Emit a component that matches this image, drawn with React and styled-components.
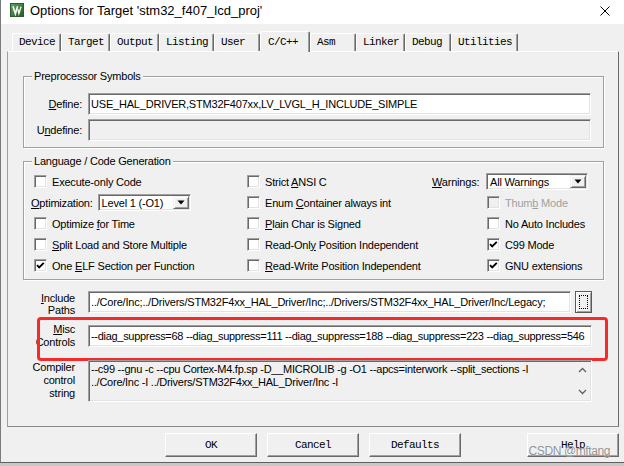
import React from "react";
import styled, { createGlobalStyle } from "styled-components";

const Global = createGlobalStyle`
  html, body { margin: 0; padding: 0; }
  body {
    background: #c8c8c8;
    font-family: "Liberation Sans", Arial, sans-serif;
  }
  #root { width: 624px; height: 466px; overflow: hidden; }
`;

const Window = styled.div`
  box-sizing: border-box;
  width: 624px;
  height: 463px;
  background: #f0f0f0;
  border-left: 1px solid #7b7b7b;
  border-bottom: 1px solid #5f5f5f;
  display: flex;
  flex-direction: column;
`;

const TitleBar = styled.div`
  box-sizing: border-box;
  flex: none;
  height: 24px;
  background: #fff;
  display: flex;
  align-items: flex-start;
  padding: 3px 0 0 9px;
`;

const TitleText = styled.span`
  margin-left: 6px;
  font: 13px/15px "Liberation Sans", Arial, sans-serif;
  color: #000;
`;

const CloseIcon = styled.svg`
  margin: 3px 14px 0 auto;
  flex: none;
`;

const Body = styled.div`
  flex: 1;
  display: flex;
  flex-direction: column;
  padding: 7px 5px 0 6px;
`;

const TabStrip = styled.div`
  display: flex;
  align-items: flex-end;
  height: 20px;
  padding-left: 5px;
  position: relative;
  z-index: 1;
`;

const Tab = styled.div`
  box-sizing: border-box;
  height: ${(p) => (p.$active ? 21 : 18)}px;
  margin-bottom: ${(p) => (p.$active ? -1 : 0)}px;
  min-width: ${(p) => (p.$active ? 50 : 46)}px;
  padding: 0 5px 0 ${(p) => (p.$active ? 7 : 6)}px;
  display: flex;
  align-items: center;
  background: #f0f0f0;
  font: 11px/1 "Liberation Mono", "Courier New", monospace;
  letter-spacing: -0.6px;
  color: #000;
  border-top: 1px solid #fff;
  border-left: 1px solid #fff;
  border-right: 1px solid #696969;
  box-shadow: inset -1px 0 0 #a0a0a0;
  border-radius: 2px 2px 0 0;
`;

const Panel = styled.div`
  box-sizing: border-box;
  height: 376px;
  flex: none;
  display: flex;
  flex-direction: column;
  border: 1px solid;
  border-color: #fff #696969 #8a8a8a #a0a0a0;
`;

const Group = styled.div`
  margin: ${(p) => p.$top}px 14px 0 15px;
  padding: 0 12px ${(p) => p.$bottom}px 0;
  display: flex;
  flex-direction: column;
  border: 1px solid #a0a0a0;
  box-shadow: inset 1px 1px 0 #fff, 1px 1px 0 #fff;
`;

const Legend = styled.span`
  align-self: flex-start;
  margin: -7px 0 0 8px;
  padding: 0 2px;
  height: 13px;
  line-height: 13px;
  background: #f0f0f0;
  font-size: 11px;
  letter-spacing: -0.2px;
  color: #000;
`;

const SymbolRows = styled.div`
  margin-top: 10px;
  display: flex;
  flex-direction: column;
  gap: 4px;
`;

const SymbolRow = styled.div`
  display: flex;
  align-items: center;
  height: 22px;
`;

const SymbolLabel = styled.span`
  width: 58px;
  margin-right: 6px;
  text-align: right;
  font-size: 11px;
  letter-spacing: -0.2px;
  color: #000;
`;

const Field = styled.div`
  box-sizing: border-box;
  flex: 1;
  min-width: 0;
  height: ${(p) => p.$h || 22}px;
  padding: 0 2px;
  display: flex;
  align-items: center;
  overflow: hidden;
  white-space: nowrap;
  background: ${(p) => (p.$disabled ? "#f0f0f0" : "#fff")};
  border: 1px solid;
  border-color: #a0a0a0 #fff #fff #a0a0a0;
  box-shadow: inset 1px 1px 0 #696969, inset -1px -1px 0 #e3e3e3;
  font-size: 11px;
  letter-spacing: ${(p) => (p.$tight ? -0.3 : -0.2)}px;
  color: #000;
`;

const OptionGrid = styled.div`
  margin-top: 3px;
  padding-left: 7px;
  display: grid;
  grid-template-columns: 216px 185px 54px 1fr;
  grid-auto-rows: 21px;
  align-items: center;
`;

const CheckItem = styled.label`
  display: flex;
  align-items: center;
  gap: 5px;
  margin-left: ${(p) => p.$indent || 0}px;
  grid-column: ${(p) => p.$col || "auto"};
  font-size: 11px;
  letter-spacing: -0.2px;
  white-space: nowrap;
  color: ${(p) => (p.$disabled ? "#a0a0a0" : "#000")};
`;

const Box = styled.span`
  box-sizing: border-box;
  flex: none;
  width: 13px;
  height: 13px;
  display: flex;
  align-items: center;
  justify-content: center;
  border: 1px solid;
  border-color: #a0a0a0 #fff #fff #a0a0a0;
  box-shadow: inset 1px 1px 0 #696969, inset -1px -1px 0 #e3e3e3;
  background: ${(p) => (p.$disabled ? "#f0f0f0" : "#fff")};
`;

const FieldLabel = styled.span`
  font-size: 11px;
  letter-spacing: -0.2px;
  white-space: nowrap;
  color: #000;
`;

const Inline = styled.div`
  display: flex;
  align-items: center;
`;

const Combo = styled.div`
  box-sizing: border-box;
  width: ${(p) => p.$w}px;
  height: 17px;
  margin-left: ${(p) => p.$ml || 0}px;
  padding: 1px 1px 1px 3px;
  display: flex;
  align-items: center;
  background: #fff;
  border: 1px solid;
  border-color: #a0a0a0 #fff #fff #a0a0a0;
  box-shadow: inset 1px 1px 0 #696969, inset -1px -1px 0 #e3e3e3;
  font-size: 11px;
  letter-spacing: -0.2px;
  color: #000;
`;

const ComboText = styled.span`
  flex: 1;
  white-space: nowrap;
`;

const DropButton = styled.span`
  box-sizing: border-box;
  width: 16px;
  height: 13px;
  display: flex;
  align-items: center;
  justify-content: center;
  background: #f0f0f0;
  border: 1px solid;
  border-color: #f0f0f0 #696969 #696969 #f0f0f0;
  box-shadow: inset 1px 1px 0 #fff, inset -1px -1px 0 #a0a0a0;
`;

const Fields = styled.div`
  margin: 11px 26px 0 15px;
  display: flex;
  flex-direction: column;
`;

const FieldRow = styled.div`
  position: relative;
  display: flex;
  align-items: flex-start;
  margin-top: ${(p) => p.$mt || 0}px;
`;

const SideLabel = styled.span`
  flex: none;
  width: 52px;
  margin: ${(p) => p.$mt || 0}px 13px 0 0;
  text-align: right;
  font-size: 11px;
  line-height: ${(p) => p.$lh || 13}px;
  letter-spacing: -0.2px;
  color: #000;
`;

const Browse = styled.span`
  box-sizing: border-box;
  flex: none;
  width: 17px;
  height: 22px;
  margin-left: 4px;
  padding: 3px;
  display: flex;
  background: #f0f0f0;
  border: 1px solid #5a5a5a;
  box-shadow: inset 1px 1px 0 #fff, inset -1px -1px 0 #a0a0a0;
`;

const FocusRing = styled.span`
  flex: 1;
  border: 1px dotted #000;
`;

const Highlight = styled.span`
  position: absolute;
  top: -8px;
  bottom: -12px;
  left: 14px;
  right: -16px;
  border: 3px solid #f52b2b;
  border-radius: 4px;
  pointer-events: none;
`;

const CommandBox = styled.div`
  box-sizing: border-box;
  flex: 1;
  min-width: 0;
  height: 42px;
  display: flex;
  background: #f0f0f0;
  border: 1px solid;
  border-color: #a0a0a0 #fff #fff #a0a0a0;
  box-shadow: inset 1px 1px 0 #696969, inset -1px -1px 0 #e3e3e3;
`;

const CommandText = styled.div`
  flex: 1;
  min-width: 0;
  padding: 2px 0 0 2px;
  font-size: 11px;
  line-height: 13px;
  letter-spacing: -0.25px;
  color: #000;
  overflow: hidden;
  white-space: nowrap;
`;

const ScrollBar = styled.div`
  flex: none;
  width: 15px;
  padding: 0 1px 1px 0;
  display: flex;
  flex-direction: column;
  justify-content: space-between;
`;

const ScrollArrow = styled.span`
  height: 17px;
  display: flex;
  align-items: center;
  justify-content: center;
`;

const ButtonRow = styled.div`
  position: relative;
  display: flex;
  gap: 10px;
  margin: 6px 0 0 158px;
`;

const DialogButton = styled.button`
  box-sizing: border-box;
  width: 92px;
  height: 24px;
  margin-left: ${(p) => (p.$push ? "auto" : "0")};
  padding: 0;
  background: #f0f0f0;
  border: 1px solid;
  border-color: #fff #696969 #696969 #fff;
  box-shadow: inset -1px -1px 0 #a0a0a0;
  font: 11px/1 "Liberation Mono", "Courier New", monospace;
  letter-spacing: -0.6px;
  color: #000;
`;

const Watermark = styled.span`
  position: absolute;
  right: 9px;
  top: 11px;
  font: 12px/14px "Liberation Sans", Arial, sans-serif;
  letter-spacing: -0.4px;
  color: rgba(118, 118, 118, 0.8);
  text-shadow: 0 0 1px rgba(255, 255, 255, 0.9);
  pointer-events: none;
`;

const Check = () => (
  <svg width="9" height="9" viewBox="0 0 9 9">
    <polyline points="1,4.2 3.2,6.5 7.8,1.8" fill="none" stroke="#000" strokeWidth="1.9" />
  </svg>
);

const Triangle = () => (
  <svg width="8" height="5" viewBox="0 0 8 5">
    <polygon points="0.5,0.5 7.5,0.5 4,4.5" fill="#000" />
  </svg>
);

const Chevron = ({ up }) => (
  <svg width="9" height="6" viewBox="0 0 9 6">
    <polyline
      points={up ? "1,5 4.5,1.5 8,5" : "1,1 4.5,4.5 8,1"}
      fill="none"
      stroke="#606060"
      strokeWidth="1.3"
    />
  </svg>
);

const AppIcon = () => (
  <svg width="14" height="14" viewBox="0 0 14 14">
    <defs>
      <linearGradient id="uvGreen" x1="0" y1="0" x2="1" y2="1">
        <stop offset="0" stopColor="#5fa35f" />
        <stop offset="1" stopColor="#1f5f26" />
      </linearGradient>
    </defs>
    <rect x="0.5" y="0.5" width="13" height="13" fill="url(#uvGreen)" stroke="#2c5b2c" />
    <path d="M3 3.2 L5.4 10.8 L7.6 3.2" fill="none" stroke="#fff" strokeWidth="1.6" />
    <path d="M7.8 6.2 L8.9 10.6 L11 3.8" fill="none" stroke="#fff" strokeWidth="1.3" />
  </svg>
);

const CheckBox = ({ checked, disabled, children, indent, col }) => (
  <CheckItem $indent={indent} $col={col} $disabled={disabled}>
    <Box $disabled={disabled}>{checked && <Check />}</Box>
    <span>{children}</span>
  </CheckItem>
);

const Select = ({ w, ml, children }) => (
  <Combo $w={w} $ml={ml}>
    <ComboText>{children}</ComboText>
    <DropButton>
      <Triangle />
    </DropButton>
  </Combo>
);

const tabs = ["Device", "Target", "Output", "Listing", "User", "C/C++", "Asm", "Linker", "Debug", "Utilities"];

export default function App() {
  return (
    <>
      <Global />
      <Window>
        <TitleBar>
          <AppIcon />
          <TitleText>Options for Target 'stm32_f407_lcd_proj'</TitleText>
          <CloseIcon width="10" height="10" viewBox="0 0 10 10">
            <path d="M0.5 0.5 L9.5 9.5 M9.5 0.5 L0.5 9.5" stroke="#000" strokeWidth="1" />
          </CloseIcon>
        </TitleBar>

        <Body>
          <TabStrip>
            {tabs.map((t) => (
              <Tab key={t} $active={t === "C/C++"}>
                {t}
              </Tab>
            ))}
          </TabStrip>

          <Panel>
            <Group $top={24} $bottom={6}>
              <Legend>Preprocessor Symbols</Legend>
              <SymbolRows>
                <SymbolRow>
                  <SymbolLabel>
                    <u>D</u>efine:
                  </SymbolLabel>
                  <Field>USE_HAL_DRIVER,STM32F407xx,LV_LVGL_H_INCLUDE_SIMPLE</Field>
                </SymbolRow>
                <SymbolRow>
                  <SymbolLabel>
                    U<u>n</u>define:
                  </SymbolLabel>
                  <Field $disabled />
                </SymbolRow>
              </SymbolRows>
            </Group>

            <Group $top={13} $bottom={3}>
              <Legend>Language / Code Generation</Legend>
              <OptionGrid>
                <CheckBox indent={3}>Execute-only Code</CheckBox>
                <CheckBox>
                  Strict <u>A</u>NSI C
                </CheckBox>
                <FieldLabel>
                  <u>W</u>arnings:
                </FieldLabel>
                <Select w={102}>All Warnings</Select>

                <Inline>
                  <FieldLabel>
                    <u>O</u>ptimization:
                  </FieldLabel>
                  <Select w={93} ml={5}>
                    Level 1 (-O1)
                  </Select>
                </Inline>
                <CheckBox>
                  Enum <u>C</u>ontainer always int
                </CheckBox>
                <CheckBox col={4} indent={1} disabled>
                  Thum<u>b</u> Mode
                </CheckBox>

                <CheckBox indent={3}>
                  Optimize <u>f</u>or Time
                </CheckBox>
                <CheckBox>
                  <u>P</u>lain Char is Signed
                </CheckBox>
                <CheckBox col={4} indent={1}>
                  No Auto Includes
                </CheckBox>

                <CheckBox indent={3}>
                  <u>S</u>plit Load and Store Multiple
                </CheckBox>
                <CheckBox>
                  Read-Onl<u>y</u> Position Independent
                </CheckBox>
                <CheckBox col={4} indent={1} checked>
                  C99 Mode
                </CheckBox>

                <CheckBox indent={3} checked>
                  One <u>E</u>LF Section per Function
                </CheckBox>
                <CheckBox>
                  <u>R</u>ead-Write Position Independent
                </CheckBox>
                <CheckBox col={4} indent={1} checked>
                  GNU extensions
                </CheckBox>
              </OptionGrid>
            </Group>

            <Fields>
              <FieldRow>
                <SideLabel $lh={12} $mt={1}>
                  <u>I</u>nclude
                  <br />
                  Paths
                </SideLabel>
                <Field>
                  ../Core/Inc;../Drivers/STM32F4xx_HAL_Driver/Inc;../Drivers/STM32F4xx_HAL_Driver/Inc/Legacy;
                </Field>
                <Browse>
                  <FocusRing />
                </Browse>
              </FieldRow>

              <FieldRow $mt={9}>
                <SideLabel $mt={-2}>
                  <u>M</u>isc
                  <br />
                  Controls
                </SideLabel>
                <Field $tight>
                  --diag_suppress=68 --diag_suppress=111 --diag_suppress=188 --diag_suppress=223 --diag_suppress=546
                </Field>
                <Highlight />
              </FieldRow>

              <FieldRow $mt={11}>
                <SideLabel $mt={1}>
                  Compiler
                  <br />
                  control
                  <br />
                  string
                </SideLabel>
                <CommandBox>
                  <CommandText>
                    --c99 --gnu -c --cpu Cortex-M4.fp.sp -D__MICROLIB -g -O1 --apcs=interwork --split_sections -I
                    <br />
                    ../Core/Inc -I ../Drivers/STM32F4xx_HAL_Driver/Inc -I
                  </CommandText>
                  <ScrollBar>
                    <ScrollArrow>
                      <Chevron up />
                    </ScrollArrow>
                    <ScrollArrow>
                      <Chevron />
                    </ScrollArrow>
                  </ScrollBar>
                </CommandBox>
              </FieldRow>
            </Fields>
          </Panel>

          <ButtonRow>
            <DialogButton>OK</DialogButton>
            <DialogButton>Cancel</DialogButton>
            <DialogButton>Defaults</DialogButton>
            <DialogButton $push>Help</DialogButton>
            <Watermark>CSDN @mftang</Watermark>
          </ButtonRow>
        </Body>
      </Window>
    </>
  );
}
